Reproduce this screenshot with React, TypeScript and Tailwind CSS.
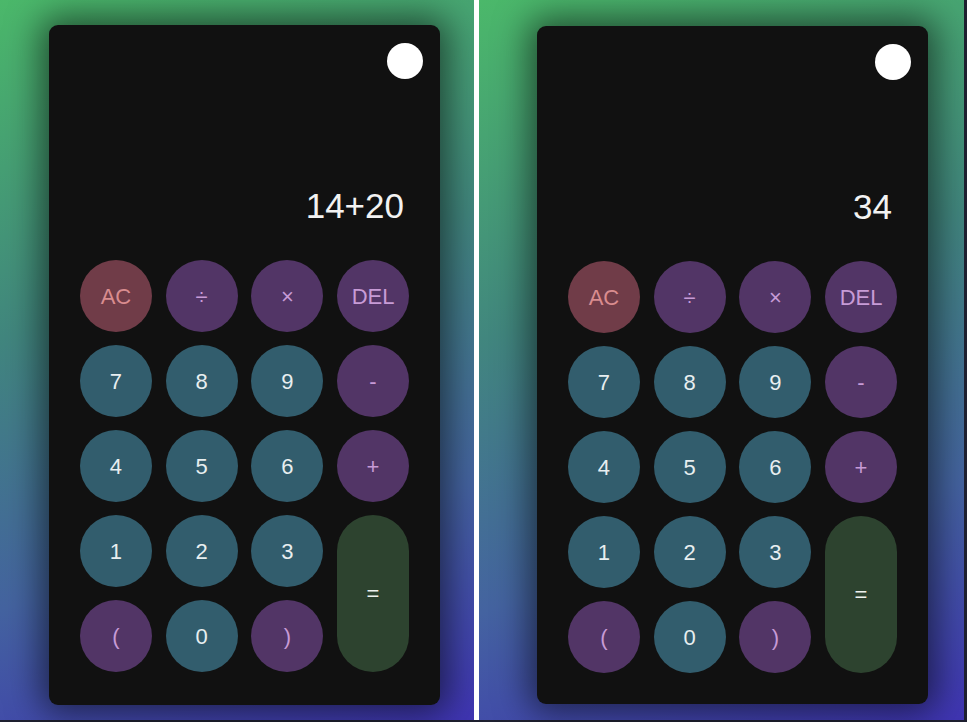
const keys: { label: string; kind: 'clear' | 'op' | 'num' | 'eq' }[] = [
  { label: 'AC', kind: 'clear' },
  { label: '÷', kind: 'op' },
  { label: '×', kind: 'op' },
  { label: 'DEL', kind: 'op' },
  { label: '7', kind: 'num' },
  { label: '8', kind: 'num' },
  { label: '9', kind: 'num' },
  { label: '-', kind: 'op' },
  { label: '4', kind: 'num' },
  { label: '5', kind: 'num' },
  { label: '6', kind: 'num' },
  { label: '+', kind: 'op' },
  { label: '1', kind: 'num' },
  { label: '2', kind: 'num' },
  { label: '3', kind: 'num' },
  { label: '=', kind: 'eq' },
  { label: '(', kind: 'op' },
  { label: '0', kind: 'num' },
  { label: ')', kind: 'op' },
];

const kindClass = {
  clear: 'bg-[#703c48] text-[#d98c8f] rounded-full',
  op: 'bg-[#523566] text-[#c79bd6] rounded-full',
  num: 'bg-[#325d6d] text-[#e8eef0] rounded-full',
  eq: 'bg-[#2d432f] text-[#eef2ee] row-span-2 rounded-full',
};

function Calculator({ value, height }: { value: string; height: string }) {
  return (
    <div
      className={`flex w-[391px] flex-col rounded-[9px] bg-[#111111] shadow-[0_0_34px_8px_rgba(0,0,0,0.55)] ${height}`}
    >
      <div className="flex justify-end pr-[17px] pt-[18px]">
        <button type="button" className="h-[36px] w-[36px] rounded-full bg-white" />
      </div>
      <div className="mt-[109px] pr-[36px] text-right text-[35px] leading-none text-[#f2f2f2]">
        {value}
      </div>
      <div className="mt-[37px] grid grid-cols-[repeat(4,72px)] grid-rows-[repeat(5,72px)] justify-center gap-x-[13.7px] gap-y-[13px]">
        {keys.map((k) => (
          <button
            key={k.label}
            type="button"
            className={`flex items-center justify-center text-[22px] ${kindClass[k.kind]}`}
          >
            {k.label}
          </button>
        ))}
      </div>
    </div>
  );
}

export default function App() {
  return (
    <div
      className="flex h-[722px] w-[967px] flex-col overflow-hidden bg-[#1e2030]"
      style={{ fontFamily: '"Liberation Sans", Arial, sans-serif' }}
    >
      <div className="flex h-[720px]">
        <div className="h-full w-[474px] bg-[linear-gradient(165deg,#4bb86a_0%,#41867e_40%,#4463a0_72%,#3f34b2_100%)] pl-[49px] pt-[25px]">
          <Calculator value="14+20" height="h-[680px]" />
        </div>
        <div className="h-full w-[5px] bg-white" />
        <div className="h-full w-[485px] bg-[linear-gradient(165deg,#4bb86a_0%,#41867e_40%,#4463a0_72%,#3f34b2_100%)] pl-[58px] pt-[26px]">
          <Calculator value="34" height="h-[678px]" />
        </div>
        <div className="h-full w-[3px] bg-[#1e2030]" />
      </div>
    </div>
  );
}
